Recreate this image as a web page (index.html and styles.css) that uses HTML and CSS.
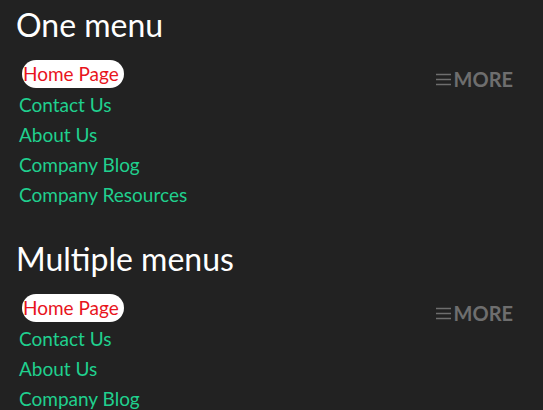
FILE: index.html
```html
<!DOCTYPE html>
<html>
<head>
<meta charset="utf-8">
<link rel="stylesheet" href="styles.css">
</head>
<body>
<section class="demo">
  <h2 class="title">One menu</h2>
  <nav class="menu">
    <ul class="links">
      <li><a class="link active" href="#">Home Page</a></li>
      <li><a class="link" href="#">Contact Us</a></li>
      <li><a class="link" href="#">About Us</a></li>
      <li><a class="link" href="#">Company Blog</a></li>
      <li><a class="link" href="#">Company Resources</a></li>
    </ul>
    <button class="more">
      <svg class="more-icon" width="15" height="13" viewBox="0 0 15 13"><path d="M0 1.5h15M0 6.5h15M0 11.5h15" stroke="currentColor" stroke-width="1.3"/></svg>
      <span>MORE</span>
    </button>
  </nav>
</section>
<section class="demo">
  <h2 class="title">Multiple menus</h2>
  <nav class="menu">
    <ul class="links">
      <li><a class="link active" href="#">Home Page</a></li>
      <li><a class="link" href="#">Contact Us</a></li>
      <li><a class="link" href="#">About Us</a></li>
      <li><a class="link" href="#">Company Blog</a></li>
      <li><a class="link" href="#">Company Resources</a></li>
    </ul>
    <button class="more">
      <svg class="more-icon" width="15" height="13" viewBox="0 0 15 13"><path d="M0 1.5h15M0 6.5h15M0 11.5h15" stroke="currentColor" stroke-width="1.3"/></svg>
      <span>MORE</span>
    </button>
  </nav>
</section>
</body>
</html>
```
FILE: styles.css
```css
html, body {
  margin: 0;
  padding: 0;
  background: #222222;
  font-family: Lato, "Open Sans", sans-serif;
}
body {
  padding: 0 30px 0 16px;
}
.demo {
  margin-bottom: 25px;
}
.title {
  margin: 0;
  padding-top: 4px;
  font-size: 32px;
  line-height: 42px;
  font-weight: 400;
  color: #ffffff;
}
.menu {
  display: flex;
  justify-content: space-between;
  align-items: flex-start;
  margin-top: 13px;
}
.links {
  list-style: none;
  margin: 0;
  padding: 0;
  display: flex;
  flex-direction: column;
}
.links li {
  height: 30px;
  display: flex;
  align-items: center;
}
.link {
  font-size: 19px;
  color: #20d08e;
  text-decoration: none;
  padding-left: 3px;
}
.link.active {
  color: #e8141c;
  background: #ffffff;
  border-radius: 14px;
  margin-left: 6px;
  padding: 2px 5px 3px 1px;
}
.more {
  display: flex;
  align-items: center;
  gap: 3px;
  margin-top: 8px;
  background: none;
  border: 0;
  padding: 0;
  font-family: Lato, sans-serif;
  font-size: 20px;
  font-weight: 700;
  color: #6e6e6e;
}
```
